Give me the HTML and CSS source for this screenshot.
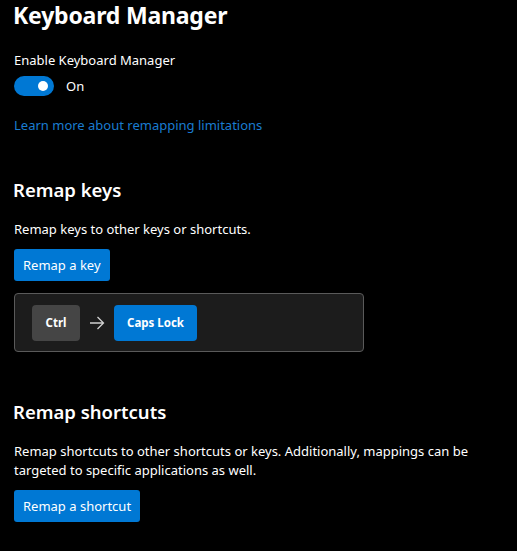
FILE: index.html
```html
<!DOCTYPE html>
<html>
<head>
<meta charset="utf-8">
<link rel="stylesheet" href="styles.css">
</head>
<body>
<div class="page">
  <h1 class="title">Keyboard Manager</h1>
  <div class="label">Enable Keyboard Manager</div>
  <div class="toggle-row">
    <span class="toggle"><span class="knob"></span></span>
    <span class="toggle-text">On</span>
  </div>
  <a class="link" href="#">Learn more about remapping limitations</a>

  <h2 class="section">Remap keys</h2>
  <div class="desc">Remap keys to other keys or shortcuts.</div>
  <button class="btn">Remap a key</button>
  <div class="mapbox">
    <span class="key key-gray">Ctrl</span>
    <svg class="arrow" width="16" height="14" viewBox="0 0 16 14"><path d="M1 7H14.5M8.5 1L14.5 7L8.5 13" fill="none" stroke="#d0d0d0" stroke-width="1.3"/></svg>
    <span class="key key-blue">Caps Lock</span>
  </div>

  <h2 class="section section2">Remap shortcuts</h2>
  <div class="desc desc2">Remap shortcuts to other shortcuts or keys. Additionally, mappings can be targeted to specific applications as well.</div>
  <button class="btn">Remap a shortcut</button>
</div>
</body>
</html>
```
FILE: styles.css
```css
html, body {
  margin: 0;
  padding: 0;
  background: #000;
}
.page {
  font-family: "Noto Sans", "Open Sans", sans-serif;
  color: #fff;
  padding: 0 14px;
  display: flex;
  flex-direction: column;
  align-items: flex-start;
}
.title {
  margin: 0;
  margin-left: -1px;
  font-size: 23px;
  font-weight: 700;
  line-height: 30px;
  letter-spacing: -0.2px;
}
.label {
  margin-top: 20px;
  font-size: 13px;
  line-height: 20px;
  color: #fff;
}
.toggle-row {
  margin-top: 6px;
  display: flex;
  align-items: center;
  gap: 12px;
}
.toggle {
  width: 40px;
  height: 20px;
  border-radius: 10px;
  background: #0078d4;
  position: relative;
  display: block;
}
.knob {
  position: absolute;
  width: 10px;
  height: 10px;
  border-radius: 50%;
  background: #fff;
  top: 5px;
  right: 6px;
}
.toggle-text {
  font-size: 13px;
  line-height: 20px;
}
.link {
  margin-top: 19px;
  font-size: 13px;
  line-height: 20px;
  color: #1a7cd0;
  text-decoration: none;
}
.section {
  margin: 42px 0 0 -1px;
  font-size: 18.5px;
  font-weight: 600;
  line-height: 26px;
}
.section2 {
  margin-top: 47px;
}
.desc {
  margin-top: 17px;
  font-size: 13px;
  line-height: 19px;
}
.desc2 {
  margin-top: 17px;
  max-width: 480px;
}
.btn {
  margin-top: 10px;
  height: 32px;
  padding: 0 9px;
  border: none;
  border-radius: 3px;
  background: #0078d4;
  color: #fff;
  font-family: "Noto Sans", "Open Sans", sans-serif;
  font-size: 13px;
}
.mapbox {
  margin-top: 12px;
  box-sizing: border-box;
  width: 350px;
  height: 59px;
  background: #1c1c1c;
  border: 1px solid #5a5a5a;
  border-radius: 4px;
  display: flex;
  align-items: center;
  padding: 0 0 0 17px;
  gap: 9px;
}
.key {
  height: 36px;
  border-radius: 4px;
  display: flex;
  align-items: center;
  justify-content: center;
  font-size: 11.5px;
  font-weight: 700;
}
.key-gray {
  width: 48px;
  background: #454545;
}
.key-blue {
  width: 83px;
  background: #0078d4;
}
.arrow {
  display: block;
}
```
